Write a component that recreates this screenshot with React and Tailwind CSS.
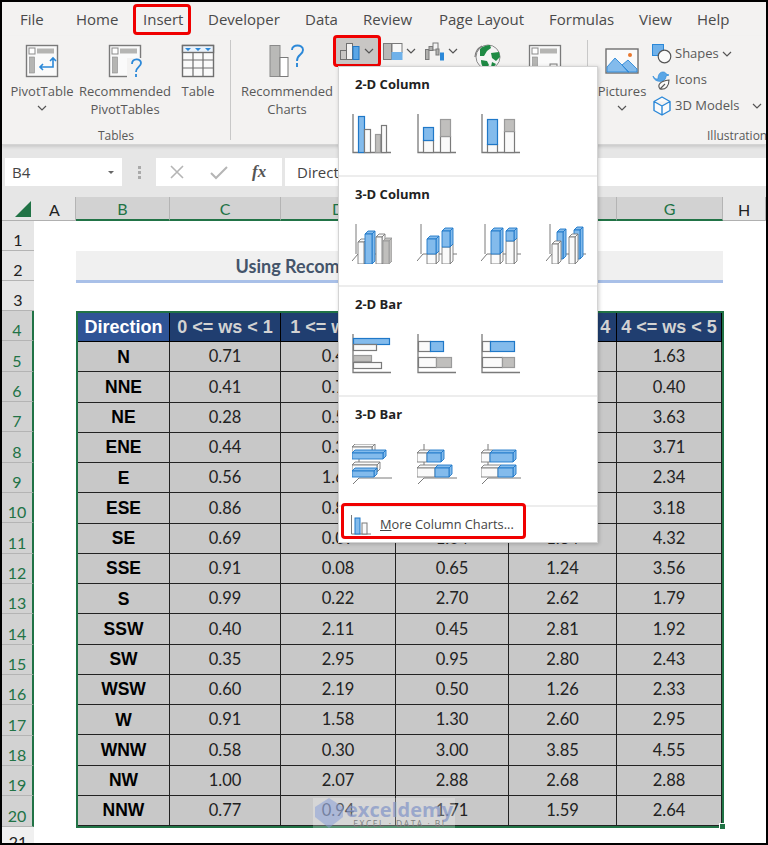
import React from "react";

const G = "#7a7a7a", B = "#1f78c8", BF = "#83bbec", GF = "#c0bfbd", WF = "#fafafa";
const fills = { b: [BF, B], g: [GF, "#9a9a9a"], w: [WF, G] };

function Chev({ className = "" }) {
  return (
    <svg width="10" height="6" viewBox="0 0 10 6" className={className}>
      <path d="M1 1l4 4 4-4" fill="none" stroke="#555" strokeWidth="1.2" />
    </svg>
  );
}

function R({ x, y, w, h, k }) {
  return <rect x={x + 0.5} y={y + 0.5} width={w} height={h} fill={fills[k][0]} stroke={fills[k][1]} strokeWidth="1.2" />;
}

function R3({ x, y, w, h, k, d = 3 }) {
  const [f, s] = fills[k];
  return (
    <g stroke={s} strokeWidth="0.9" strokeLinejoin="round">
      <polygon points={`${x},${y} ${x + d},${y - d} ${x + w + d},${y - d} ${x + w},${y}`} fill={f} />
      <polygon points={`${x + w},${y} ${x + w + d},${y - d} ${x + w + d},${y + h - d} ${x + w},${y + h}`} fill={f} />
      <rect x={x} y={y} width={w} height={h} fill={f} />
    </g>
  );
}

function Ax2() {
  return <path d="M1 0V38.5H39" fill="none" stroke={G} strokeWidth="1.3" />;
}
function Ax3() {
  return <path d="M4 0V30M0 37l6-7H40" fill="none" stroke={G} strokeWidth="1" />;
}

function Chart({ children }) {
  return (
    <svg width="40" height="40" viewBox="0 0 40 40" className="shrink-0">
      {children}
    </svg>
  );
}

const col2 = [
  <Chart key="a"><Ax2 /><R x={6} y={2} w={6} h={36} k="b" /><R x={12} y={15} w={6} h={23} k="w" /><R x={23} y={20} w={5} h={18} k="g" /><R x={29} y={11} w={5} h={27} k="w" /></Chart>,
  <Chart key="b"><Ax2 /><R x={6} y={26} w={10} h={12} k="w" /><R x={6} y={13} w={10} h={13} k="b" /><R x={23} y={22} w={10} h={16} k="w" /><R x={23} y={5} w={10} h={17} k="g" /></Chart>,
  <Chart key="c"><Ax2 /><R x={6} y={30} w={10} h={8} k="w" /><R x={6} y={5} w={10} h={25} k="b" /><R x={23} y={17} w={10} h={21} k="w" /><R x={23} y={5} w={10} h={12} k="g" /></Chart>,
];
const col3 = [
  <Chart key="a"><Ax3 /><R3 x={6} y={18} w={6} h={22} k="w" /><R3 x={13} y={10} w={7} h={30} k="b" /><R3 x={24} y={13} w={6} h={27} k="w" /><R3 x={31} y={17} w={6} h={23} k="g" /></Chart>,
  <Chart key="b"><Ax3 /><R3 x={10} y={30} w={9} h={10} k="w" /><R3 x={10} y={15} w={9} h={15} k="b" /><R3 x={25} y={23} w={8} h={17} k="w" /><R3 x={25} y={7} w={8} h={16} k="b" /></Chart>,
  <Chart key="c"><Ax3 /><R3 x={10} y={30} w={9} h={10} k="w" /><R3 x={10} y={7} w={9} h={23} k="b" /><R3 x={25} y={17} w={8} h={23} k="w" /><R3 x={25} y={7} w={8} h={10} k="b" /></Chart>,
  <Chart key="d"><Ax3 /><R3 x={11} y={8} w={6} h={27} k="b" /><R3 x={28} y={6} w={6} h={29} k="b" /><R3 x={6} y={20} w={6} h={20} k="w" /><R3 x={23} y={13} w={6} h={27} k="w" /></Chart>,
];
const bar2 = [
  <Chart key="a"><Ax2 /><R x={1} y={4} w={36} h={6} k="b" /><R x={1} y={10} w={23} h={6} k="w" /><R x={1} y={21} w={18} h={6} k="g" /><R x={1} y={28} w={28} h={6} k="w" /></Chart>,
  <Chart key="b"><Ax2 /><R x={1} y={7} w={12} h={10} k="w" /><R x={13} y={7} w={13} h={10} k="b" /><R x={1} y={23} w={18} h={10} k="w" /><R x={19} y={23} w={15} h={10} k="g" /></Chart>,
  <Chart key="c"><Ax2 /><R x={1} y={7} w={8} h={10} k="w" /><R x={9} y={7} w={24} h={10} k="b" /><R x={1} y={23} w={20} h={10} k="w" /><R x={21} y={23} w={12} h={10} k="g" /></Chart>,
];
const Ax3b = () => <path d="M7 0V30M1 40l6-6H40" fill="none" stroke={G} strokeWidth="1" />;
const bar3 = [
  <Chart key="a"><Ax3b /><R3 x={0} y={3} w={20} h={6} k="w" /><R3 x={0} y={9} w={31} h={6} k="b" /><R3 x={0} y={21} w={25} h={7} k="w" /><R3 x={0} y={27} w={22} h={6} k="b" /></Chart>,
  <Chart key="b"><Ax3b /><R3 x={0} y={9} w={10} h={9} k="w" /><R3 x={10} y={9} w={14} h={9} k="b" /><R3 x={0} y={24} w={18} h={9} k="w" /><R3 x={18} y={24} w={14} h={9} k="b" /></Chart>,
  <Chart key="c"><Ax3b /><R3 x={0} y={9} w={9} h={9} k="w" /><R3 x={9} y={9} w={23} h={9} k="b" /><R3 x={0} y={24} w={17} h={9} k="w" /><R3 x={17} y={24} w={15} h={9} k="b" /></Chart>,
];

function PivotIcon({ kind }) {
  return (
    <svg width="36" height="34" viewBox="0 0 36 34">
      <rect x="2.5" y="1.5" width="31" height="31" fill="#fafafa" stroke="#7a7a7a" strokeWidth="1.4" />
      <rect x="5" y="4" width="6" height="6" fill="#fff" stroke="#8a8a8a" />
      <rect x="13" y="4.5" width="17" height="5" fill="#b5b5b3" />
      <rect x="5.5" y="13" width="5" height="16" fill="#b5b5b3" stroke="#8a8a8a" strokeWidth="0.6" />
      {kind === "p" ? (
        <path d="M29 14v9h-13M26 17l3-3 3 3M19 20l-3 3 3 3" fill="none" stroke="#2b88d8" strokeWidth="1.6" />
      ) : (
        <g>
          <rect x="20" y="14" width="16" height="20" fill="#f3f2f1" />
          <path d="M25 20c0-6 9-6 9-1 0 4-5 4-5 9M29 30v3" fill="none" stroke="#2b88d8" strokeWidth="1.8" />
        </g>
      )}
    </svg>
  );
}

function TableIcon() {
  return (
    <svg width="34" height="34" viewBox="0 0 34 34">
      <rect x="1.5" y="1.5" width="31" height="31" fill="#fafafa" stroke="#6f6f6f" strokeWidth="1.4" />
      <rect x="1.5" y="1.5" width="31" height="7" fill="#e8f1fa" stroke="#6f6f6f" strokeWidth="1.4" />
      <path d="M4 4h6l-3 3zM14 4h6l-3 3zM24 4h6l-3 3z" fill="#2b88d8" />
      <path d="M1.5 16h31M1.5 24h31M12 8v24M22 8v24" stroke="#6f6f6f" strokeWidth="1.2" />
    </svg>
  );
}

function RecChartIcon() {
  return (
    <svg width="36" height="34" viewBox="0 0 36 34">
      <rect x="1" y="1.5" width="10" height="31" fill="#b9b9b7" stroke="#8a8a8a" />
      <rect x="11" y="13.5" width="8" height="19" fill="#fff" stroke="#7a7a7a" />
      <path d="M23 6c0-6 11-6 11 0 0 5-6 4-6 11M28 19v4" fill="none" stroke="#2b88d8" strokeWidth="1.9" />
    </svg>
  );
}

function ColBtnIcon() {
  return (
    <svg width="20" height="19" viewBox="0 0 20 19">
      <rect x="0.5" y="8.5" width="6" height="9" fill="#c8c6c4" stroke="#6f6f6f" />
      <rect x="6.5" y="1.5" width="6" height="16" fill="#f3f2f1" stroke="#6f6f6f" />
      <rect x="13" y="4.5" width="6" height="13" fill="#5aa6e6" stroke="#1f78c8" />
    </svg>
  );
}

function HierIcon() {
  return (
    <svg width="20" height="19" viewBox="0 0 20 19">
      <rect x="0.5" y="1.5" width="8" height="16" fill="#b9b9b7" stroke="#7a7a7a" />
      <rect x="9" y="1.5" width="10" height="9" fill="#f8f8f8" stroke="#7a7a7a" />
      <rect x="9" y="10.5" width="10" height="7" fill="#6fb1ea" stroke="#6fb1ea" />
    </svg>
  );
}

function WaterfallIcon() {
  return (
    <svg width="20" height="19" viewBox="0 0 20 19">
      <rect x="0.5" y="7.5" width="3.5" height="10" fill="#b0b0ae" stroke="#7a7a7a" />
      <rect x="4" y="4.5" width="4" height="4" fill="#b0b0ae" stroke="#7a7a7a" />
      <rect x="8" y="1" width="5" height="7" fill="#f4f4f4" stroke="#7a7a7a" />
      <rect x="11" y="7" width="3" height="6" fill="#b0b0ae" stroke="#7a7a7a" />
      <rect x="15" y="10.5" width="4" height="8" fill="#2b88d8" />
    </svg>
  );
}

function GlobeIcon() {
  return (
    <svg width="28" height="28" viewBox="0 0 28 28">
      <circle cx="15" cy="14" r="12" fill="#f4f4f4" stroke="#8a8a8a" />
      <path d="M2 14a13 13 0 0 1 7-11" fill="none" stroke="#7a7a7a" strokeWidth="1.2" />
      <path d="M7 6c3-3 7-4 10-4l1 3-4 3-3 5-4 0zM18 10l8-1 1 5-4 4-4-3zM8 17l6 1 2 4-3 4c-3-1-5-4-5-9zM19 19l4 2-3 4-2-1z" fill="#1e8a44" />
    </svg>
  );
}

function PivotChartIcon() {
  return (
    <svg width="38" height="34" viewBox="0 0 38 34">
      <rect x="1.5" y="1.5" width="31" height="31" fill="#fafafa" stroke="#7a7a7a" strokeWidth="1.3" />
      <rect x="4" y="4" width="6" height="6" fill="#fff" stroke="#8a8a8a" />
      <rect x="12" y="4.5" width="17" height="5" fill="#b5b5b3" />
      <rect x="4.5" y="13" width="5" height="16" fill="#b5b5b3" stroke="#8a8a8a" strokeWidth="0.6" />
      <rect x="22" y="20" width="7" height="13" fill="#f3f2f1" stroke="#7a7a7a" />
      <rect x="30" y="24" width="5" height="9" fill="#2b88d8" />
    </svg>
  );
}

function PictureIcon() {
  return (
    <svg width="34" height="26" viewBox="0 0 34 26">
      <rect x="1" y="1" width="32" height="24" fill="#fafafa" stroke="#6f6f6f" strokeWidth="1.4" />
      <path d="M2 19l8-9 14 14H2zM17 17l6-5 9 9v3h-9z" fill="#83bbec" stroke="#2b88d8" strokeWidth="0.9" />
      <circle cx="25" cy="7" r="2" fill="#e8772e" />
    </svg>
  );
}

function ShapesIcon() {
  return (
    <svg width="20" height="20" viewBox="0 0 20 20">
      <rect x="0.5" y="0.5" width="11" height="11" fill="#6fb1ea" stroke="#2b88d8" />
      <circle cx="12.5" cy="12.5" r="6.3" fill="#fafafa" stroke="#555" strokeWidth="1.2" />
    </svg>
  );
}

function IconsIcon() {
  return (
    <svg width="20" height="20" viewBox="0 0 20 20">
      <path d="M1 6c2 3 3 3 5 3 0-3 1-7 5-7 2 0 3 1 3 2l3 1-3 1c0 2-1 4-3 5-4 1-9 0-10-5z" fill="#5aa6e6" stroke="#2b88d8" strokeWidth="0.7" />
      <path d="M8 19c-3-4 0-8 9-9 0 6-3 10-9 9zM8 19l5-5" fill="#fafafa" stroke="#555" strokeWidth="1.1" />
    </svg>
  );
}

function CubeIcon() {
  return (
    <svg width="20" height="20" viewBox="0 0 20 20">
      <path d="M10 1l8 4.5v9L10 19l-8-4.5v-9zM2 5.500l8 4.500 8-4.500M10 10v9" fill="#fafafa" stroke="#2b88d8" strokeWidth="1.4" strokeLinejoin="round" />
    </svg>
  );
}

function RedBox({ className }) {
  return <span className={`absolute border-[3px] border-[#f00000] rounded-[4px] pointer-events-none ${className}`} />;
}

const tabs = [
  ["File", "w-[56px]"],
  ["Home", "w-[67px]"],
  ["Insert", "w-[65px]"],
  ["Developer", "w-[97px]"],
  ["Data", "w-[58px]"],
  ["Review", "w-[76px]"],
  ["Page Layout", "w-[110px]"],
  ["Formulas", "w-[90px]"],
  ["View", "w-[58px]"],
  ["Help", "w-[40px]"],
];

function BigBtn({ icon, lines, chev, className = "" }) {
  return (
    <div className={`flex flex-col items-center pt-[8px] shrink-0 ${className}`}>
      <div className="h-[34px] flex items-center justify-center">{icon}</div>
      <div className="mt-[4px] text-center leading-[18px] whitespace-nowrap">
        {lines.map((l) => (
          <div key={l}>{l}</div>
        ))}
      </div>
      {chev && <Chev className="mt-[5px]" />}
    </div>
  );
}

function SmallRow({ icon, text, chev }) {
  return (
    <div className="flex items-center h-[26px]">
      <span className="w-[23px] flex items-center">{icon}</span>
      <span className="whitespace-nowrap">{text}</span>
      {chev}
    </div>
  );
}

const colHeads = [
  ["A", "w-[42px]", false],
  ["B", "w-[94px]", true],
  ["C", "w-[111px]", true],
  ["D", "w-[115px]", true],
  ["E", "w-[113px]", true],
  ["F", "w-[108px]", true],
  ["G", "w-[106px]", true],
  ["H", "w-[43px]", false],
];

const cw = ["w-[92px]", "w-[111px]", "w-[115px]", "w-[113px]", "w-[108px]", "w-[105px]"];

const data = [
  ["N", "0.71", "0.42", "1.25", "2.10", "1.63"],
  ["NNE", "0.41", "0.73", "2.04", "1.33", "0.40"],
  ["NE", "0.28", "0.56", "1.88", "2.45", "3.63"],
  ["ENE", "0.44", "0.37", "0.92", "3.12", "3.71"],
  ["E", "0.56", "1.62", "2.31", "1.47", "2.34"],
  ["ESE", "0.86", "0.81", "1.16", "2.72", "3.18"],
  ["SE", "0.69", "0.09", "1.04", "1.84", "4.32"],
  ["SSE", "0.91", "0.08", "0.65", "1.24", "3.56"],
  ["S", "0.99", "0.22", "2.70", "2.62", "1.79"],
  ["SSW", "0.40", "2.11", "0.45", "2.81", "1.92"],
  ["SW", "0.35", "2.95", "0.95", "2.80", "2.43"],
  ["WSW", "0.60", "2.19", "0.50", "1.26", "2.33"],
  ["W", "0.91", "1.58", "1.30", "2.60", "2.95"],
  ["WNW", "0.58", "0.30", "3.00", "3.85", "4.55"],
  ["NW", "1.00", "2.07", "2.88", "2.68", "2.88"],
  ["NNW", "0.77", "0.94", "1.71", "1.59", "2.64"],
];

const heads = ["Direction", "0 <= ws < 1", "1 <= ws < 2", "2 <= ws < 3", "3 <= ws < 4", "4 <= ws < 5"];

function MenuSection({ title, icons }) {
  return (
    <div className="h-[110px] border-b-2 border-[#ededed] px-[13px] pt-[8px] shrink-0">
      <div className="pl-[3px] h-[18px] leading-[18px] text-[13px] font-bold text-[#222]">{title}</div>
      <div className="mt-[21px] flex gap-[24.500px]">{icons}</div>
    </div>
  );
}

export default function App() {
  return (
    <div className="relative w-[768px] h-[845px] box-border border-2 border-black overflow-hidden bg-white font-['Open_Sans',sans-serif] text-[#555]">
      {/* Tabs */}
      <div className="flex items-center h-[34px] pl-[18px] bg-[#f3f2f1] text-[15px] text-[#4a4a4a]">
        {tabs.map(([t, w]) => (
          <div key={t} className={`${w} shrink-0 whitespace-nowrap`}>
            <span className="relative">
              {t}
              {t === "Insert" && <RedBox className="-left-[10px] -right-[8px] -top-[5px] -bottom-[6px]" />}
            </span>
          </div>
        ))}
      </div>

      {/* Ribbon */}
      <div className="flex h-[109px] bg-[#f3f2f1] text-[13px] text-[#595959] border-b border-[#d4d4d4] shadow-[0_2px_3px_rgba(0,0,0,0.12)] relative">
        <div className="w-[228px] shrink-0 flex flex-col">
          <div className="flex flex-1">
            <BigBtn className="w-[80px]" icon={<PivotIcon kind="p" />} lines={["PivotTable"]} chev />
            <BigBtn className="w-[86px]" icon={<PivotIcon kind="r" />} lines={["Recommended", "PivotTables"]} />
            <BigBtn className="w-[60px]" icon={<TableIcon />} lines={["Table"]} />
          </div>
          <div className="text-center text-[12px] h-[16px] leading-[16px]">Tables</div>
        </div>
        <div className="w-px h-[100px] mt-[4px] bg-[#c8c8c8] shrink-0" />
        <div className="w-[356px] shrink-0 flex pl-[5px]">
          <BigBtn className="w-[102px]" icon={<RecChartIcon />} lines={["Recommended", "Charts"]} />
          <div className="flex items-start gap-[2px] pt-[1px] h-[30px]">
            <div className="relative w-[44px] h-[28px] flex items-center justify-center gap-[4px] bg-[#c8c6c4] -ml-[3px]">
              <ColBtnIcon />
              <Chev />
              <RedBox className="-inset-[2px]" />
            </div>
            <div className="w-[36px] h-[28px] flex items-center gap-[3px] pl-[2px]">
              <HierIcon />
              <Chev />
            </div>
            <div className="ml-[6px] w-[38px] h-[28px] flex items-center gap-[3px]">
              <WaterfallIcon />
              <Chev />
            </div>
          </div>
          <div className="ml-[10px] pt-[7px]"><GlobeIcon /></div>
          <div className="ml-[27px] pt-[8px]"><PivotChartIcon /></div>
        </div>
        <div className="w-px h-[100px] mt-[4px] bg-[#c8c8c8] shrink-0" />
        <div className="flex-1 flex flex-col min-w-0 overflow-hidden">
          <div className="flex flex-1">
            <BigBtn className="w-[68px] shrink-0" icon={<PictureIcon />} lines={["Pictures"]} chev />
            <div className="-ml-[4px] pt-[5px]">
              <SmallRow icon={<ShapesIcon />} text="Shapes" chev={<Chev className="ml-[3px]" />} />
              <SmallRow icon={<IconsIcon />} text="Icons" />
              <SmallRow icon={<CubeIcon />} text="3D Models" chev={<Chev className="ml-[12px]" />} />
            </div>
          </div>
          <div className="h-[16px] leading-[16px] pl-[119px] text-[12px] whitespace-nowrap">Illustrations</div>
        </div>
      </div>

      {/* Formula bar */}
      <div className="flex items-start h-[52px] pt-[13px] pl-[3px] bg-[#e6e6e6] text-[15px] text-[#444]">
        <div className="w-[117px] h-[28px] bg-white flex items-center justify-between pl-[7px] pr-[8px]">
          <span>B4</span>
          <span className="w-0 h-0 border-l-[3px] border-r-[3px] border-t-[3px] border-l-transparent border-r-transparent border-t-[#666]" />
        </div>
        <div className="w-[34px] h-[28px] flex flex-col items-center justify-center gap-[2px]">
          <span className="w-[3px] h-[3px] bg-[#aaa]" />
          <span className="w-[3px] h-[3px] bg-[#aaa]" />
          <span className="w-[3px] h-[3px] bg-[#aaa]" />
        </div>
        <div className="w-[126px] h-[28px] bg-white flex items-center pl-[13px]">
          <svg width="16" height="16" viewBox="0 0 16 16"><path d="M2 2l12 12M14 2L2 14" stroke="#b5b5b5" strokeWidth="1.6" fill="none" /></svg>
          <svg width="18" height="16" viewBox="0 0 18 16" className="ml-[25px]"><path d="M1 9l5 5L17 3" stroke="#b5b5b5" strokeWidth="2" fill="none" /></svg>
          <span className="ml-[24px] font-['Liberation_Serif',serif] italic font-bold text-[#555] text-[17px]">fx</span>
        </div>
        <div className="ml-[3px] flex-1 h-[28px] bg-white flex items-center pl-[12px]">Direction</div>
      </div>

      {/* Column headers */}
      <div className="flex h-[24px] bg-[#e6e6e6] text-[16px] font-['Lato',sans-serif]">
        <div className="w-[32px] shrink-0 flex items-center justify-end pr-[3px] border-b border-[#b0b0b0]">
          <span className="w-0 h-0 border-b-[16px] border-l-[16px] border-b-[#217346] border-l-transparent" />
        </div>
        {colHeads.map(([c, w, sel]) => (
          <div
            key={c}
            className={`${w} shrink-0 flex items-center justify-center pt-[2px] border-r border-[#b4b4b4] ${
              sel ? "bg-[#d2d2d2] text-[#217346] border-b-2 border-b-[#217346]" : "text-[#222] border-b border-b-[#b0b0b0]"
            }`}
          >
            {c}
          </div>
        ))}
      </div>

      {/* Sheet */}
      <div className="flex">
        <div className="w-[32px] shrink-0 bg-[#e6e6e6] text-[16px] leading-[20px] font-['Lato',sans-serif] text-[#222]">
          {[1, 2, 3].map((n) => (
            <div key={n} className="h-[30px] flex items-end justify-center border-b border-[#b4b4b4]">{n}</div>
          ))}
          {data.map((_, i) => i).concat([16]).map((i) => (
            <div key={i} className="h-[30.330px] flex items-end justify-center bg-[#d2d2d2] text-[#217346] border-b border-[#b4b4b4] border-r-2 border-r-[#217346]">{i + 4}</div>
          ))}
          <div className="h-[30px] flex items-start justify-center pt-[5px] bg-[#f0f0f0]">21</div>
        </div>
        <div className="pl-[42px]">
          <div className="h-[30px]" />
          <div className="w-[647px] h-[32px] pt-[1px] pr-[16px] bg-[#f0f0f0] border-b-[3px] border-[#a9c0e8] flex items-center justify-center text-[18px] font-bold font-['Lato',sans-serif] text-[#44546a] whitespace-nowrap">
            Using Recommended Charts Command
          </div>
          <div className="h-[28px]" />
          <div className="relative w-[648px] h-[517px] border-2 border-[#217346] bg-[#c8c8c8]">
            <div className="flex h-[29px] border-b border-black">
              {heads.map((h, i) => (
                <div
                  key={h}
                  className={`${cw[i]} shrink-0 flex items-center justify-center pt-[1px] whitespace-nowrap font-['Liberation_Sans',sans-serif] font-bold border-r border-black ${
                    i === 0 ? "bg-[#2f5496] text-white text-[18px]" : "bg-[#203e70] text-[#d2d2d2] text-[18px]"
                  }`}
                >
                  {h}
                </div>
              ))}
            </div>
            {data.map((row) => (
              <div key={row[0]} className="flex h-[30.250px] border-b border-[#222]">
                {row.map((v, i) => (
                  <div
                    key={i}
                    className={`${cw[i]} shrink-0 flex items-center justify-center border-r border-[#222] text-[#222] ${
                      i === 0
                        ? "font-['Liberation_Sans',sans-serif] font-bold text-[17.500px] text-black"
                        : "font-['Lato',sans-serif] text-[16.500px]"
                    }`}
                  >
                    {v}
                  </div>
                ))}
              </div>
            ))}
            <span className="absolute -right-[4px] -bottom-[4px] w-[5px] h-[5px] bg-[#217346] border border-white box-content" />
            {/* Watermark */}
            <div className="absolute left-[235px] top-[485px] w-[142px] h-[30px] bg-white/25 flex items-start">
              <svg width="32" height="30" viewBox="0 0 32 30" className="shrink-0">
                <path d="M16 0l14 9v10L16 30 2 19V9z" fill="#8aa0d8" fillOpacity="0.55" />
              </svg>
              <div className="flex flex-col items-center pl-[1px]">
                <span className="text-[20px] leading-[21px] pt-[1px] font-bold font-['Open_Sans',sans-serif] text-[#7f93c7]/70">exceldemy</span>
                <span className="text-[8.500px] leading-[8px] tracking-[1.500px] text-[#808080] font-['Open_Sans',sans-serif]">EXCEL · DATA · BI</span>
              </div>
            </div>
          </div>
        </div>
      </div>

      {/* Dropdown */}
      <div className="absolute left-[336px] top-[64px] w-[260px] h-[477px] bg-white border border-[#d4d4d4] shadow-[1px_1px_4px_rgba(0,0,0,0.2)] flex flex-col">
        <MenuSection title="2-D Column" icons={col2} />
        <MenuSection title="3-D Column" icons={col3} />
        <MenuSection title="2-D Bar" icons={bar2} />
        <MenuSection title="3-D Bar" icons={bar3} />
        <div className="relative flex-1 flex items-center pl-[12px] text-[12.800px] text-[#444]">
          <svg width="20" height="20" viewBox="0 0 20 20">
            <path d="M0.500 0V19H20" fill="none" stroke="#7a7a7a" />
            <rect x="4" y="3" width="5" height="16" fill="#83bbec" stroke="#1f78c8" />
            <rect x="11" y="8" width="5" height="11" fill="#fafafa" stroke="#7a7a7a" />
          </svg>
          <span className="ml-[9px]"><span className="underline">M</span>ore Column Charts...</span>
          <RedBox className="left-[2px] -top-[4px] bottom-[3px] w-[185px]" />
        </div>
      </div>
    </div>
  );
}
